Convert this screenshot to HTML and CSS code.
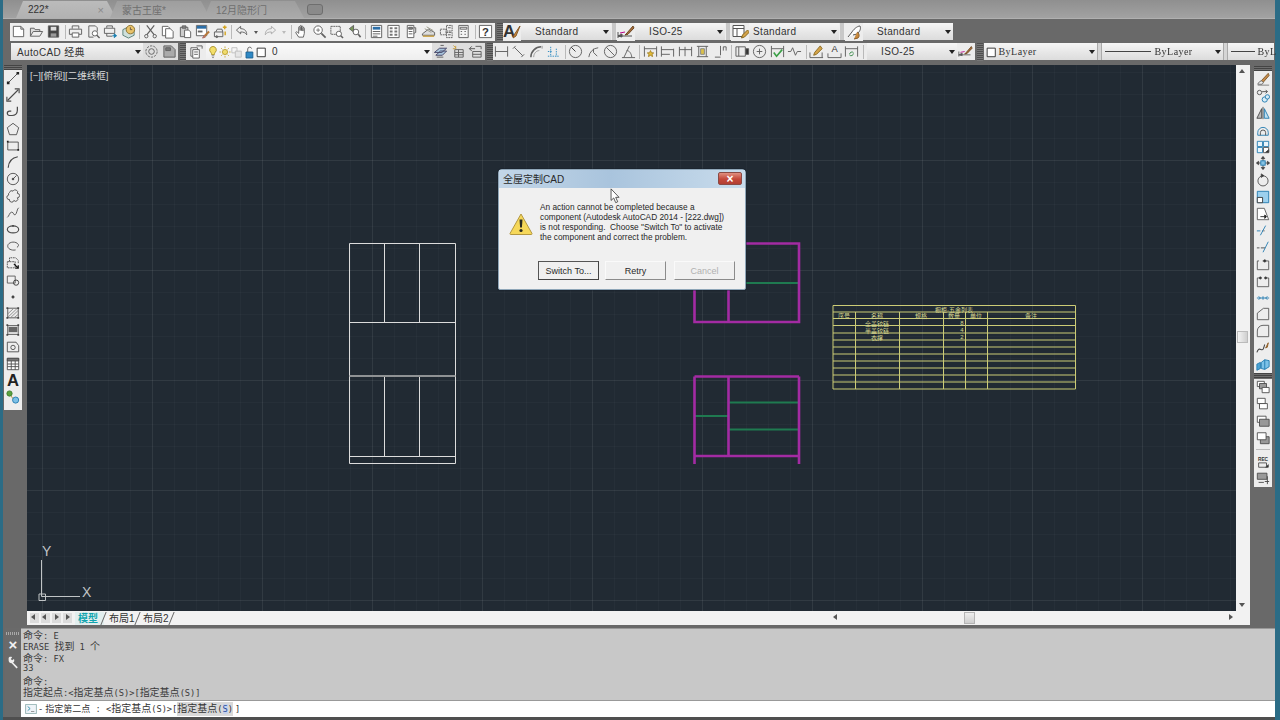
FILE: index.html
```html
<!DOCTYPE html>
<html lang="zh">
<head>
<meta charset="utf-8">
<title>AutoCAD 2014</title>
<link rel="stylesheet" href="styles.css">
</head>
<body>
<svg class="defs" width="0" height="0" aria-hidden="true">
<defs>
<symbol id="new" viewBox="0 0 16 16"><path d="M2.5 2.5h8l3 3v8h-11zM10.5 2.5v3h3" fill="#fff"/></symbol>
<symbol id="open" viewBox="0 0 16 16"><path d="M1.5 13V4.5h4l1 1.5h5v2" fill="#ddd"/><path d="M1.5 13l3-5h10l-3 5z" fill="#eee"/></symbol>
<symbol id="save" viewBox="0 0 16 16"><path d="M2.5 2h11v12h-11z" fill="#444"/><path d="M5 3h6v4H5z" fill="#ddd" stroke="none"/><path d="M5 10h6v3.5H5z" fill="#999" stroke="none"/></symbol>
<symbol id="print" viewBox="0 0 16 16"><path d="M4.500 5V2h7v3M1.500 11V5.500h13V11h-3M4.500 11H1.500"/><path d="M4.500 9.500h7V14h-7z" fill="#fff"/></symbol>
<symbol id="prev" viewBox="0 0 16 16"><path d="M3 2h7l2 2v4M3 2v12h5"/><circle cx="9.500" cy="10" r="2.800" fill="#fff"/><path d="M11.500 12l3 3" stroke-width="1.500"/></symbol>
<symbol id="pub" viewBox="0 0 16 16"><path d="M4 4V2h6v2M1.500 10V4.500h11V10zM4 10v3h6"/><path d="M10 12.500h3M12 10.500l2.500 2-2.500 2z" stroke="#1a7fb0" fill="#1a7fb0"/></symbol>
<symbol id="globe" viewBox="0 0 16 16"><path d="M2 6l6-3 6 3v6l-6 3-6-3z" fill="#cfe0dc" stroke="#5c8078"/><circle cx="10" cy="6" r="4.500" fill="#e9c36a" stroke="#8a7030"/><path d="M10 3.500V6h2" stroke="#654"/></symbol>
<symbol id="cut" viewBox="0 0 16 16"><path d="M4 1.500l8 10M12 1.500l-8 10" stroke-width="1.300"/><circle cx="3.500" cy="13" r="1.800"/><circle cx="12.500" cy="13" r="1.800"/></symbol>
<symbol id="copy" viewBox="0 0 16 16"><path d="M2.500 2.500h6l2 2v8h-8z" fill="#fff"/><path d="M6 5h5l3 3v7H6z" fill="#fff"/></symbol>
<symbol id="paste" viewBox="0 0 16 16"><path d="M2.500 3.500h8v10h-8z" fill="#ccc"/><path d="M4.500 2h4v2.500h-4z" fill="#888"/><path d="M7 6.500h4.500l2 2v6H7z" fill="#fff"/></symbol>
<symbol id="match" viewBox="0 0 16 16"><path d="M1.500 1.500h11v11h-11z" fill="#fff"/><path d="M2 2h10v3H2z" fill="#2c6fa8" stroke="none"/><path d="M3 7h5v2H3z" fill="#666" stroke="none"/><path d="M15 8l-5 5" stroke="#b8793a" stroke-width="2.200"/><path d="M10 12l-2 3 3-1z" fill="#d99a3d" stroke="#a66"/></symbol>
<symbol id="block" viewBox="0 0 16 16"><path d="M1.500 8.500h9v5h-9z"/><path d="M3 8.500l1.500-3h5l1 3"/><circle cx="4" cy="13.500" r="1" fill="#777"/><path d="M12.500 1.500v4M10.500 3.500h4M13 8v4" stroke="#d5a520" stroke-width="1.500"/></symbol>
<symbol id="undo" viewBox="0 0 16 16"><path d="M6 2.500L1.500 6.500 6 10.500V8.500c3 0 5 .5 6.500 3 0-4-2-6.500-6.500-6.500z" fill="#eee"/></symbol>
<symbol id="redo" viewBox="0 0 16 16"><path d="M10 2.500l4.500 4L10 10.500V8.500c-3 0-5 .5-6.500 3 0-4 2-6.500 6.500-6.500z" fill="#eee" stroke="#aaa"/></symbol>
<symbol id="pan" viewBox="0 0 16 16"><path d="M5 14L2 9.500c-.5-1 .7-1.700 1.500-.8L5 10V3.500c0-1 1.400-1 1.500 0V7 2.300c0-1 1.500-1 1.500 0V7 3c0-1 1.500-1 1.500 0v4.500-3c0-1 1.500-1 1.500 0V10l-1 4z" fill="#fff"/></symbol>
<symbol id="zr" viewBox="0 0 16 16"><circle cx="6.500" cy="6.500" r="4.500" fill="#fff"/><path d="M10 10l4.500 4.500" stroke-width="1.800"/><path d="M4.500 6.500h4M6.500 4.500v4" stroke="#777"/></symbol>
<symbol id="zw" viewBox="0 0 16 16"><path d="M2 2.500h10v8.500H2z" stroke-dasharray="2 .6"/><circle cx="10.500" cy="10.500" r="2.800" fill="#fff"/><path d="M12.500 12.500l2.500 2.500" stroke-width="1.600"/></symbol>
<symbol id="zp" viewBox="0 0 16 16"><path d="M7 1.500L2.500 5 7 8.500z" fill="#7a9a5a"/><circle cx="9.500" cy="8.500" r="3" fill="#fff"/><path d="M12 11l2.500 3" stroke-width="1.700"/></symbol>
<symbol id="props" viewBox="0 0 16 16"><path d="M2.500 1.500h11v13h-11z" fill="#fff"/><path d="M4 3h8v3H4z" fill="#2c6fa8" stroke="none"/><path d="M4 8h8M4 10.500h8M4 13h5"/></symbol>
<symbol id="design" viewBox="0 0 16 16"><path d="M2 1.500h12v13H2z" fill="#fff"/><path d="M4 3.500h3v2H4zM9 3.500h3v2H9zM4 7h3v2H4zM9 7h3v2H9zM4 10.500h3v2H4zM9 10.500h3v2H9z" fill="#777" stroke="none"/></symbol>
<symbol id="tool" viewBox="0 0 16 16"><path d="M3.500 1.500h7v13h-7z" fill="#fff"/><path d="M5 3.500h4v2H5zM5 8h4M5 10.500h4" fill="#888"/><path d="M10.500 4h2v5l-2 1"/></symbol>
<symbol id="sheet" viewBox="0 0 16 16"><path d="M1.500 10.500L8 5.500l6.500 3.500v3H1.500z" fill="#ddd"/><path d="M6 3l7 4M4 5l7 4" stroke="#998"/><path d="M2 13h12" stroke="#c9a040" stroke-width="1.500"/></symbol>
<symbol id="markup" viewBox="0 0 16 16"><path d="M1.500 5.500h6v6h-6zM8 1.500h6v6H8zM8 9h6v5.500H8z" stroke-dasharray="2 .7" fill="#eee"/><path d="M9.500 4h3M9.500 11.500h3"/></symbol>
<symbol id="calc" viewBox="0 0 16 16"><path d="M3 1.500h10v13H3z" fill="#f5f5f5"/><path d="M4.500 3.500h7v2h-7zM5 8h1.500M9 8h1.500M5 11h1.500M9 11h1.500"/></symbol>
<symbol id="help" viewBox="0 0 16 16"><path d="M1.500 1.500h13v13h-13z" fill="#fff"/><text x="8" y="12.500" class="glyph" text-anchor="middle">?</text></symbol>
<symbol id="wset" viewBox="0 0 16 16"><circle cx="8" cy="8" r="3"/><circle cx="8" cy="8" r="6" stroke-dasharray="2.500 1.200"/></symbol>
<symbol id="wsave" viewBox="0 0 16 16"><path d="M2 2h8l4 4v8H2z" fill="#aaa"/><path d="M4 4h5v3H4z" fill="#777"/></symbol>
<symbol id="lay" viewBox="0 0 16 16"><path d="M2 4h7v9H2z" fill="#fff"/><path d="M4 6h7v9H4z" fill="#fff"/><path d="M5.500 8.500h4M5.500 11h4M8 2h6v3"/></symbol>
<symbol id="lstack" viewBox="0 0 16 16"><path d="M1.500 9L7 4.500h7.500L9.500 9zM3 12L8 7.500h6.500L10 12z" fill="#a9c6dd" stroke="#446"/><path d="M8 1.500h3.500M4 14h7"/></symbol>
<symbol id="lcur" viewBox="0 0 16 16"><path d="M4 6h9v8H4zM4 9h9M4 11.500h9M8 6v8"/><path d="M2.500 1.500l3 3M5 2v3H2" stroke="#c9a040"/></symbol>
<symbol id="lprev" viewBox="0 0 16 16"><path d="M5 8h9v6H5zM5 11h9"/><path d="M1.500 5h6M4 2.500L1.500 5 4 7.500" stroke="#555"/><path d="M8 2.500h6v3"/></symbol>
<symbol id="bulb" viewBox="0 0 14 16"><path d="M7 1.500a4 4 0 0 0-2.500 7c.6.700.8 1.400.8 2.500h3.400c0-1.100.2-1.800.8-2.500A4 4 0 0 0 7 1.500z" fill="#f3df6a" stroke="#a58e25"/><path d="M5.500 12.500h3M6 14.500h2" stroke="#777"/></symbol>
<symbol id="sun" viewBox="0 0 14 16"><circle cx="7" cy="8" r="3" fill="#f0dc6c" stroke="#b89c2a"/><path d="M7 1.500v2M7 12.500v2M.5 8h2M11.500 8h2M2.500 3.500l1.500 1.500M10 11l1.500 1.500M11.500 3.500L10 5M4 11l-1.500 1.500" stroke="#c5a93a"/></symbol>
<symbol id="frz" viewBox="0 0 14 16"><path d="M1 3h6v6H1z" stroke="#bbb"/><path d="M5 7h7v7H5z" stroke="#bbb" fill="#e6e6e6"/></symbol>
<symbol id="lock" viewBox="0 0 14 16"><path d="M3.500 8h8v7h-8z" fill="#2f88c4" stroke="#1b5f8f"/><path d="M5.500 8V4.500a2.300 2.300 0 0 1 4.500-.5"/></symbol>
<symbol id="sw" viewBox="0 0 14 16"><path d="M2.500 3.500h9.500v10H2.500z" stroke="#222" fill="#fff"/></symbol>
<symbol id="ts" viewBox="0 0 18 18"><text x="0" y="14" class="glyph big">A</text><path d="M17 3l-6 9-1 3 3-2z" fill="#c98a3e" stroke="#8a5a25"/></symbol>
<symbol id="ds" viewBox="0 0 18 18"><path d="M1 15V9M1 13h14" stroke="#555"/><path d="M1 13l4-2v3z" fill="#555"/><path d="M16 3l-6 7-2 2 3-.7 6-6.300z" fill="#a66b38" stroke="#6e4a25"/><path d="M3 10l5-1" stroke="#b08"/></symbol>
<symbol id="tbs" viewBox="0 0 18 18"><path d="M2 2.500h11v11H2z" fill="#fff"/><path d="M2 5.500h11M6 5.500v8" /><path d="M16.500 7l-5 5-1 3 3-1 5-5z" fill="#d4a348" stroke="#8a6a20"/></symbol>
<symbol id="ms" viewBox="0 0 18 18"><path d="M3 14l4-5c1-2 5-6 8-6 1 2 .5 5-3 8l-4 1" fill="#fff"/><path d="M12 9c2 1 3 4 1 6l-4 1" fill="#c98a3e" stroke="#8a5a25"/></symbol>
<symbol id="dlin" viewBox="0 0 16 16"><path d="M1.500 2.500v11M14.500 2.500v11M1.500 8h13"/></symbol>
<symbol id="dal" viewBox="0 0 16 16"><path d="M2 5l3-3M11 14l3-3M3.500 3.500l9 9"/></symbol>
<symbol id="darc" viewBox="0 0 16 16"><path d="M2 14C2 8 7 3 13 3" stroke-width="1.600"/><path d="M5 14c0-4 3-7 6-7M14 2v3" stroke="#999"/></symbol>
<symbol id="dord" viewBox="0 0 16 16"><path d="M2 13h12M5 3v10M11 5v8M2 8h4" stroke="#2b8ac0" stroke-dasharray="1.500 1"/></symbol>
<symbol id="drad" viewBox="0 0 16 16"><circle cx="8" cy="8" r="6.500"/><path d="M8 8L3.500 3.500" stroke="#333"/></symbol>
<symbol id="dj" viewBox="0 0 16 16"><path d="M3 14A11 11 0 0 1 13 4M8 9l4 4M8 9V5"/></symbol>
<symbol id="ddia" viewBox="0 0 16 16"><circle cx="8" cy="8" r="6.500"/><path d="M3.500 3.500l9 9"/></symbol>
<symbol id="dang" viewBox="0 0 16 16"><path d="M1 14.500h14M3 14.500L9 2"/><path d="M6 7c3 0 5 3 5.500 7"/></symbol>
<symbol id="dq" viewBox="0 0 16 16"><path d="M1.500 2.500v11M14.500 2.500v11M1.500 5h13"/><path d="M8 7l1 2.300 2.400.2-1.800 1.500.6 2.400L8 12.100l-2.200 1.300.6-2.400-1.800-1.500 2.400-.2z" fill="#e3bd36" stroke="#a8852a"/></symbol>
<symbol id="dbase" viewBox="0 0 16 16"><path d="M1.500 2.500v11M14.500 5v8.500M1.500 6h13M1.500 11h9"/></symbol>
<symbol id="dcon" viewBox="0 0 16 16"><path d="M1.500 3v10M7.500 3v10M14.500 3v10M1.500 6h13"/></symbol>
<symbol id="dsp" viewBox="0 0 16 16"><path d="M2 2.500h12M2 13.500h12M4 2.500v11M12 2.500v11"/><path d="M6 5h4v6H6z" fill="#dcc148" stroke="#888"/></symbol>
<symbol id="dtl" viewBox="0 0 16 16"><path d="M8 2v10M2 14h6M11 3h3M11 3v4M14 3v4"/></symbol>
<symbol id="dins" viewBox="0 0 16 16"><path d="M1 3h10v10H1z"/><path d="M4 3v10" /><path d="M11.500 5h3v6h-3z" fill="#333"/></symbol>
<symbol id="dcen" viewBox="0 0 16 16"><circle cx="8" cy="8" r="6.500"/><path d="M5 8h6M8 5v6"/></symbol>
<symbol id="dchk" viewBox="0 0 16 16"><path d="M1.500 2v12M14.500 2v12M1.500 5h13"/><path d="M4 9l3 4 6-7" stroke="#3aa046" stroke-width="1.700"/></symbol>
<symbol id="dbrk" viewBox="0 0 16 16"><path d="M1 8h3l2-4 3 8 2-4h4"/></symbol>
<symbol id="dedit" viewBox="0 0 16 16"><path d="M1 14.500h14M1 9v5.500M14 9v5.500"/><path d="M12 2L6 9l-1 3 3-1 6-6z" fill="#d4a348" stroke="#8a6a20"/></symbol>
<symbol id="dtext" viewBox="0 0 16 16"><text x="8" y="9" class="glyph mid" text-anchor="middle">A</text><path d="M1 14.500h14M1 10v4.500M15 10v4.500"/></symbol>
<symbol id="dupd" viewBox="0 0 16 16"><path d="M1.500 2.500v11M14.500 2.500v11M1.500 5h13"/><path d="M6 11a2.500 2.500 0 0 1 4-2M10 10a2.500 2.500 0 0 1-4 2" stroke="#3a8a4a"/></symbol>
<symbol id="line" viewBox="0 0 16 16"><path d="M2.500 13.500l11-11"/><path d="M1 12h3v3H1zM12 1h3v3h-3z" fill="#222" stroke="none"/></symbol>
<symbol id="xline" viewBox="0 0 16 16"><path d="M2 14L14 2" stroke-width="1.300"/><path d="M1 10v5h5M10 1h5v5" stroke-width="1.300"/></symbol>
<symbol id="pline" viewBox="0 0 16 16"><path d="M13 2v4c0 4-3 6-6 6H4a2.500 2.500 0 0 1 0-5h2" stroke-width="1.400"/></symbol>
<symbol id="poly" viewBox="0 0 16 16"><path d="M8 1.500l6.500 5-2.500 8H4L1.500 6.500z"/></symbol>
<symbol id="rect" viewBox="0 0 16 16"><path d="M2 3.500h12v9H2z"/><path d="M1 2h2v2H1zM13 11.500h2v2h-2z" fill="#222" stroke="none"/></symbol>
<symbol id="arc" viewBox="0 0 16 16"><path d="M2.500 14.500C3 8 7 3 13.500 2" stroke-width="1.400"/></symbol>
<symbol id="circ" viewBox="0 0 16 16"><circle cx="8" cy="8" r="6.500"/><path d="M8 8l4-4" /><circle cx="8" cy="8" r="1" fill="#222"/></symbol>
<symbol id="cloud" viewBox="0 0 16 16"><path d="M4 4a2.500 2.500 0 0 1 4-1.500A2.500 2.500 0 0 1 13 5a2.500 2.500 0 0 1 0 5 2.500 2.500 0 0 1-4 3 2.500 2.500 0 0 1-5-1 2.500 2.500 0 0 1-1-5 2.500 2.500 0 0 1 1-3z"/></symbol>
<symbol id="spl" viewBox="0 0 16 16"><path d="M1.500 13c2-1 2.500-6 5-6s2 4 4 3 2-7 4-8"/></symbol>
<symbol id="ell" viewBox="0 0 16 16"><ellipse cx="8" cy="8.500" rx="6.500" ry="4" stroke-width="1.300"/><path d="M7 4.500h2" stroke-width="2"/></symbol>
<symbol id="ella" viewBox="0 0 16 16"><path d="M11 12.500C6 13.500 1.500 11 2 7.500S9 2 13 5c2 1.500 1.500 3.500-.5 4.500"/></symbol>
<symbol id="ins" viewBox="0 0 16 16"><path d="M1.500 6.500h9v7h-9zM4 6.500V2h7l3 3v4" stroke-dasharray="2 .8"/><path d="M9 9l5 5M14 10.500V14h-3.500" stroke="#111" stroke-width="1.400"/></symbol>
<symbol id="mkb" viewBox="0 0 16 16"><path d="M1.500 3.500h9v8h-9z" fill="#eee" stroke="#555"/><circle cx="11.500" cy="11" r="3" stroke="#333"/></symbol>
<symbol id="pt" viewBox="0 0 16 16"><circle cx="8" cy="8" r="1.300" fill="#333"/></symbol>
<symbol id="hat" viewBox="0 0 16 16"><path d="M2 2.500h12v11H2z"/><path d="M2 13l11-10.500M5 13.500l9-8.500M2 9l7-6.500M9 13.500l5-4" stroke="#888"/><path d="M.5 1.500h2v2h-2zM13 1.500h2v2h-2zM.5 12.500h2v2h-2zM13 12.500h2v2h-2z" fill="#444" stroke="none"/></symbol>
<symbol id="grad" viewBox="0 0 16 16"><path d="M2 3h12v10H2z"/><path d="M3 4.500h10v6H3z" fill="#666" stroke="none"/><path d="M.5 1.500h2v2h-2zM13 1.500h2v2h-2zM.5 12.500h2v2h-2zM13 12.500h2v2h-2z" fill="#444" stroke="none"/></symbol>
<symbol id="reg" viewBox="0 0 16 16"><path d="M1.500 2.500h10l3 4v7h-13z"/><circle cx="8" cy="8.500" r="2.500"/></symbol>
<symbol id="tab" viewBox="0 0 16 16"><path d="M1.500 1.500h13v13h-13z" fill="#fff"/><path d="M1.500 1.500h13v3h-13z" fill="#777"/><path d="M1.500 8h13M1.500 11h13M6 4.500v10M10.500 4.500v10"/></symbol>
<symbol id="mt" viewBox="0 0 16 16"><text x="8" y="15" class="glyph huge" text-anchor="middle">A</text></symbol>
<symbol id="add" viewBox="0 0 16 16"><circle cx="4" cy="4" r="3" fill="#5aa23e" stroke="#3b7a2a"/><path d="M6 7c1 3 3 3 4 3" stroke="#a8852a"/><circle cx="11" cy="11.500" r="3.500" fill="#7dc0e6" stroke="#1e78ae"/></symbol>
<symbol id="erase" viewBox="0 0 16 16"><path d="M14 1.500L6 10l2 2 7-8z" fill="#c4894a" stroke="#7d5a2c"/><path d="M6 10l-3 2-1 2h5l1.500-2z" fill="#eee" stroke="#666"/><path d="M2 15h13" stroke="#777"/></symbol>
<symbol id="cop2" viewBox="0 0 16 16"><circle cx="4" cy="4" r="2.500"/><circle cx="10" cy="12" r="3" stroke="#1e78ae" fill="#d6ecf7"/><circle cx="13" cy="9" r="2.500" stroke="#1e78ae" fill="#d6ecf7"/><path d="M7 3h6M11 1l2 2-2 2"/></symbol>
<symbol id="mir" viewBox="0 0 16 16"><path d="M8 1v14M6.500 3v11H1z" stroke="#444" fill="#bbb"/><path d="M9.500 3v11H15z" stroke="#1e78ae" fill="#bfdff0"/></symbol>
<symbol id="off" viewBox="0 0 16 16"><path d="M2 14v-3a6 6 0 0 1 12 0v3z" stroke="#1e78ae"/><path d="M5 14v-3a3 3 0 0 1 6 0v3"/></symbol>
<symbol id="arr" viewBox="0 0 16 16"><path d="M1.500 1.500h6v6h-6zM8.500 1.500h6v6h-6zM1.500 8.500h6v6h-6z" stroke="#1e78ae" fill="#eaf5fb"/><path d="M8.500 8.500h6v6h-6z" fill="#fff"/><path d="M11 14l3.500-3v3z" fill="#222"/></symbol>
<symbol id="mov" viewBox="0 0 16 16"><path d="M8 1v14M1 8h14"/><path d="M8 .5l2 2.500H6zM8 15.500L6 13h4zM.5 8L3 6v4zM15.500 8L13 10V6z" fill="#333"/><rect x="5.500" y="5.500" width="5" height="5" fill="#86c2e2" stroke="#1e78ae"/></symbol>
<symbol id="rot" viewBox="0 0 16 16"><circle cx="8" cy="9" r="5.800"/><path d="M6 1l3 2-3 2z" fill="#333"/></symbol>
<symbol id="sca" viewBox="0 0 16 16"><path d="M1.500 1.500h13v13h-13z" fill="#9cd0ee" stroke="#1e78ae"/><path d="M1.500 8.500h6v6h-6z" fill="#fff" stroke="#333"/></symbol>
<symbol id="str" viewBox="0 0 16 16"><path d="M1.500 1.500h8l5 13h-13z" fill="#fff" stroke="#555"/><path d="M5 11h5M10 9v4l2-2z" fill="#222" stroke="#222"/></symbol>
<symbol id="tri" viewBox="0 0 16 16"><path d="M1 9h4M7 9h1M11 3L5 14" stroke="#1e78ae"/><path d="M8 9h2" stroke="#777"/></symbol>
<symbol id="ext" viewBox="0 0 16 16"><path d="M1 9h3M5.500 9h5" stroke="#444"/><path d="M14 2L8 14" stroke="#1e78ae"/></symbol>
<symbol id="brk1" viewBox="0 0 16 16"><path d="M1.500 14.500v-10h2M14.500 14.500v-10h-7M1.500 14.500h13" stroke="#555"/><circle cx="10" cy="4.500" r="1.300" fill="#222"/></symbol>
<symbol id="brk2" viewBox="0 0 16 16"><path d="M1.500 14.500v-10h3M14.500 14.500v-10h-3M1.500 14.500h13" stroke="#555"/><circle cx="5" cy="4.500" r="1.200" fill="#222"/><circle cx="11" cy="4.500" r="1.200" fill="#222"/></symbol>
<symbol id="joi" viewBox="0 0 16 16"><path d="M1 8h14" stroke="#1e78ae"/><path d="M3 6l2 2-2 2M13 6l-2 2 2 2M8 6v4" stroke="#1e78ae"/></symbol>
<symbol id="cha" viewBox="0 0 16 16"><path d="M1.500 14.500V7l7-5.500h6v13z" stroke="#555"/></symbol>
<symbol id="fil" viewBox="0 0 16 16"><path d="M1.500 14.500V8a6.500 6.500 0 0 1 6.500-6.500h6.500v13z" stroke="#555"/></symbol>
<symbol id="bed" viewBox="0 0 16 16"><path d="M1 13c2-6 4-3 6-3s2-4 3-6" stroke="#444" stroke-width="1.200"/><path d="M11 8l3-6-1 5z" fill="#c98a3e" stroke="#8a5a25"/></symbol>
<symbol id="exp" viewBox="0 0 16 16"><path d="M1 7l4-2v7l-4 2z" fill="#4ba3d4" stroke="#1e78ae"/><path d="M6 5l4-3 5 1v7l-5 3-4-1z" fill="#7dc2e8" stroke="#1e78ae"/><path d="M10 2v11" stroke="#1e78ae"/></symbol>
<symbol id="ord1" viewBox="0 0 16 16"><path d="M1.500 1.500h8v6h-8z" fill="#fff"/><path d="M4 4h8v6H4z" fill="#999"/><path d="M7 8.500h8v6H7z" fill="#fff"/></symbol>
<symbol id="ord2" viewBox="0 0 16 16"><path d="M1.500 1.500h9v6h-9z" fill="#fff"/><path d="M4 7.500h9v6H4z" fill="#fff"/></symbol>
<symbol id="ord3" viewBox="0 0 16 16"><path d="M1.500 2.500h10v7h-10z" fill="#fff"/><path d="M4 6h11v8H4z" fill="#999"/></symbol>
<symbol id="ord4" viewBox="0 0 16 16"><path d="M5 6.500h10v8H5z" fill="#999"/><path d="M1.500 2h10v8h-10z" fill="#fff"/></symbol>
<symbol id="rec" viewBox="0 0 16 16"><text x="8" y="7" class="glyph tiny" text-anchor="middle">REC</text><path d="M3 9h9v5H3z"/><path d="M11 14l3-3v3z" fill="#222"/></symbol>
<symbol id="rep" viewBox="0 0 16 16"><path d="M1.500 2.500h11v7h-11z" fill="#999"/><path d="M13 6v9M10 12h5M3 13h6" stroke="#444"/></symbol>
<symbol id="warn" viewBox="0 0 24 22"><path d="M12 1L23 20.500a.8.800 0 0 1-.7 1H1.700a.8.800 0 0 1-.7-1z" fill="#f6d85a" stroke="#b39740"/><path d="M10.500 6.500h3l-.6 8h-1.800z" fill="#2a2a20" stroke="none"/><circle cx="12" cy="17.500" r="1.600" fill="#2a2a20" stroke="none"/></symbol>
<symbol id="wrench" viewBox="0 0 16 16"><path d="M3 3.500c.4-1.500 2.500-2 4-1L5.500 4.500 7 6l2-1.500c1 1.500.5 3.500-1 4L13.500 14 12 15.500 6.500 9.500C4.500 9.500 3 8 3 6z" fill="#eee" stroke="none"/></symbol>
<symbol id="prompt" viewBox="0 0 14 12"><path d="M.5.500h13v11H.5z" fill="#eef3f7" stroke="#8aa"/><path d="M3 3l3 2.500L3 8" stroke="#28a" fill="none"/><path d="M7 9h4" stroke="#888"/></symbol>
</defs>
</svg>

<main class="win">
  <header class="tabbar">
    <div class="dtab dtab-on"><span>222*</span><b class="dclose">×</b></div>
    <div class="dtab"><span>蒙古王座*</span></div>
    <div class="dtab"><span>12月隐形门</span></div>
    <div class="dnew"></div>
  </header>

  <section class="row row1">
    <div class="tb tb-std">
      <svg class="i"><use href="#new"/></svg><svg class="i"><use href="#open"/></svg><svg class="i"><use href="#save"/></svg><i class="sep"></i>
      <svg class="i"><use href="#print"/></svg><svg class="i"><use href="#prev"/></svg><svg class="i"><use href="#pub"/></svg><svg class="i"><use href="#globe"/></svg><i class="sep"></i>
      <svg class="i"><use href="#cut"/></svg><svg class="i"><use href="#copy"/></svg><svg class="i"><use href="#paste"/></svg><svg class="i"><use href="#match"/></svg><svg class="i"><use href="#block"/></svg><i class="sep"></i>
      <svg class="i"><use href="#undo"/></svg><i class="drop"></i><svg class="i"><use href="#redo"/></svg><i class="drop drop-off"></i><i class="sep"></i>
      <svg class="i"><use href="#pan"/></svg><svg class="i"><use href="#zr"/></svg><svg class="i"><use href="#zw"/></svg><svg class="i"><use href="#zp"/></svg><i class="sep"></i>
      <svg class="i"><use href="#props"/></svg><svg class="i"><use href="#design"/></svg><svg class="i"><use href="#tool"/></svg><svg class="i"><use href="#sheet"/></svg><svg class="i"><use href="#markup"/></svg><svg class="i"><use href="#calc"/></svg><i class="sep"></i>
      <svg class="i"><use href="#help"/></svg>
    </div>
    <i class="grip"></i>
    <div class="tb tb-sty">
      <svg class="s"><use href="#ts"/></svg><div class="combo w90 ctr">Standard</div><i class="minis"></i>
      <svg class="s"><use href="#ds"/></svg><div class="combo w90 ctr">ISO-25</div><i class="minis"></i>
      <svg class="s"><use href="#tbs"/></svg><div class="combo w90 lft">Standard</div><i class="minis"></i>
      <svg class="s"><use href="#ms"/></svg><div class="combo w90 ctr">Standard</div>
    </div>
  </section>

  <section class="row row2">
    <div class="combo wsp">AutoCAD 经典</div>
    <div class="tb tb-ws"><svg class="i"><use href="#wset"/></svg><svg class="i"><use href="#wsave"/></svg></div>
    <i class="grip"></i>
    <div class="tb tb-lay"><svg class="i"><use href="#lay"/></svg></div>
    <div class="combo wlay">
      <svg class="ls"><use href="#bulb"/></svg><svg class="ls"><use href="#sun"/></svg><svg class="ls"><use href="#frz"/></svg><svg class="ls"><use href="#lock"/></svg><svg class="ls"><use href="#sw"/></svg><span class="lname">0</span>
    </div>
    <div class="tb tb-ws"><svg class="i"><use href="#lstack"/></svg><svg class="i"><use href="#lcur"/></svg><svg class="i"><use href="#lprev"/></svg></div>
    <i class="grip"></i>
    <div class="tb tb-dim">
      <svg class="i"><use href="#dlin"/></svg><svg class="i"><use href="#dal"/></svg><svg class="i"><use href="#darc"/></svg><svg class="i"><use href="#dord"/></svg><i class="sep"></i>
      <svg class="i"><use href="#drad"/></svg><svg class="i"><use href="#dj"/></svg><svg class="i"><use href="#ddia"/></svg><svg class="i"><use href="#dang"/></svg><i class="sep"></i>
      <svg class="i"><use href="#dq"/></svg><svg class="i"><use href="#dbase"/></svg><svg class="i"><use href="#dcon"/></svg><svg class="i"><use href="#dsp"/></svg><svg class="i"><use href="#dtl"/></svg><i class="sep"></i>
      <svg class="i"><use href="#dins"/></svg><svg class="i"><use href="#dcen"/></svg><svg class="i"><use href="#dchk"/></svg><svg class="i"><use href="#dbrk"/></svg><i class="sep"></i>
      <svg class="i"><use href="#dedit"/></svg><svg class="i"><use href="#dtext"/></svg><svg class="i"><use href="#dupd"/></svg><i class="sep"></i>
      <div class="combo w90 ctr dimstyle">ISO-25</div>
      <svg class="i"><use href="#ds"/></svg>
    </div>
    <i class="grip"></i>
    <div class="combo wbl"><svg class="ls"><use href="#sw"/></svg><span class="bl">ByLayer</span></div>
    <i class="bar"></i>
    <div class="combo wlt"><i class="ltline"></i><span class="bl">ByLayer</span></div>
    <i class="bar"></i>
    <div class="combo wlw"><i class="ltline short"></i><span class="bl">ByL</span></div>
  </section>

  <section class="work">
    <aside class="vtool vtool-l">
      <i class="vgrip"></i>
      <div class="vgroup">
        <svg class="v"><use href="#line"/></svg><svg class="v"><use href="#xline"/></svg><svg class="v"><use href="#pline"/></svg><svg class="v"><use href="#poly"/></svg><svg class="v"><use href="#rect"/></svg><svg class="v"><use href="#arc"/></svg><svg class="v"><use href="#circ"/></svg><svg class="v"><use href="#cloud"/></svg><svg class="v"><use href="#spl"/></svg><svg class="v"><use href="#ell"/></svg><svg class="v"><use href="#ella"/></svg><svg class="v"><use href="#ins"/></svg><svg class="v"><use href="#mkb"/></svg><svg class="v"><use href="#pt"/></svg><svg class="v"><use href="#hat"/></svg><svg class="v"><use href="#grad"/></svg><svg class="v"><use href="#reg"/></svg><svg class="v"><use href="#tab"/></svg><svg class="v"><use href="#mt"/></svg><svg class="v"><use href="#add"/></svg>
      </div>
    </aside>

    <div class="center">
      <div class="view">
        <div class="canvas">
          <svg class="drawing" viewBox="27 65 1209 546">
            <text x="30" y="79" class="vlabel">[−][俯视][二维线框]</text>
            <g class="w">
              <path d="M349.500 243.500H455.500V463.500H349.500ZM384.500 243.500V322.500M419.500 243.500V322.500M349.500 322.500H455.500M384.500 376V456.500M419.500 376V456.500M349.500 456.500H455.500"/>
              <path class="w2" d="M349.500 376H455.500"/>
            </g>
            <g class="gr">
              <path d="M745 283H798M729 402.500H798M729 429.500H798M695 416H728"/>
            </g>
            <g class="mg">
              <path d="M694.500 243.500H799V322H694.500ZM728.500 243.500V322"/>
              <path d="M694.500 376.500H799M694.500 376.500V464M799 376.500V464M694.500 456H799M728.500 376.500V456"/>
            </g>
            <g class="ty">
              <path d="M833 305.500H1075.500V389H833ZM833 312H1075.500M833 318.500H1075.500M833 325.500H1075.500M833 333H1075.500M833 340H1075.500M833 347H1075.500M833 354H1075.500M833 361H1075.500M833 368H1075.500M833 375H1075.500M833 382H1075.500M855.500 312V389M899.500 312V389M943.500 312V389M965.500 312V389M987.500 312V389"/>
            </g>
            <g class="tt">
              <text x="954" y="311.500">橱柜·五金列表</text>
              <text x="844" y="318">序号</text><text x="877" y="318">名称</text><text x="921" y="318">规格</text><text x="954" y="318">数量</text><text x="976" y="318">单位</text><text x="1031" y="318">备注</text>
              <text x="877" y="325.500">全盖铰链</text><text x="877" y="332.500">半盖铰链</text><text x="877" y="339.500">衣撑</text>
              <text x="962" y="324.500">8</text><text x="962" y="331.500">4</text><text x="962" y="338.500">2</text>
            </g>
            <g class="ucs">
              <path d="M41.500 560V596.500H80"/>
              <path d="M39 594H45.500V600.500H39Z"/>
              <text x="42" y="556">Y</text><text x="82" y="597">X</text>
            </g>
          </svg>
        </div>
        <div class="vscroll"><i class="up"></i><i class="vthumb"></i><i class="down"></i></div>
      </div>
      <div class="hbar">
        <div class="navs"><i class="nav n1"></i><i class="nav n2"></i><i class="nav n3"></i><i class="nav n4"></i></div>
        <div class="ltabs"><span class="ltab ltab-on">模型</span><span class="ltab">布局1</span><span class="ltab">布局2</span></div>
        <div class="hscroll"><i class="hl"></i><i class="hthumb"></i><i class="hr"></i></div>
      </div>
    </div>

    <aside class="vtool vtool-r">
      <i class="vgrip"></i>
      <div class="vgroup">
        <svg class="v"><use href="#erase"/></svg><svg class="v"><use href="#cop2"/></svg><svg class="v"><use href="#mir"/></svg><svg class="v"><use href="#off"/></svg><svg class="v"><use href="#arr"/></svg><svg class="v"><use href="#mov"/></svg><svg class="v"><use href="#rot"/></svg><svg class="v"><use href="#sca"/></svg><svg class="v"><use href="#str"/></svg><svg class="v"><use href="#tri"/></svg><svg class="v"><use href="#ext"/></svg><svg class="v"><use href="#brk1"/></svg><svg class="v"><use href="#brk2"/></svg><svg class="v"><use href="#joi"/></svg><svg class="v"><use href="#cha"/></svg><svg class="v"><use href="#fil"/></svg><svg class="v"><use href="#bed"/></svg><svg class="v"><use href="#exp"/></svg>
      </div>
      <i class="vgrip vgrip-2"></i>
      <div class="vgroup">
        <svg class="v"><use href="#ord1"/></svg><svg class="v"><use href="#ord2"/></svg><svg class="v"><use href="#ord3"/></svg><svg class="v"><use href="#ord4"/></svg><i class="hsep"></i><svg class="v"><use href="#rec"/></svg><svg class="v"><use href="#rep"/></svg>
      </div>
    </aside>
  </section>

  <section class="cmd">
    <div class="cmdside"><i class="cgrip"></i><b class="cx">×</b><svg class="wr"><use href="#wrench"/></svg></div>
    <div class="cmdmain">
      <div class="hist">
        <p><span class="zh">命令</span>: E</p>
        <p>ERASE <span class="zh">找到</span> 1 <span class="zh">个</span></p>
        <p><span class="zh">命令</span>: FX</p>
        <p>33</p>
        <p><span class="zh">命令</span>:</p>
        <p><span class="zh">指定起点</span>:&lt;<span class="zh">指定基点</span>(S)&gt;[<span class="zh">指定基点</span>(S)]</p>
      </div>
      <div class="input">
        <svg class="pr"><use href="#prompt"/></svg>
        <span class="inline"><span class="dash">-</span><span class="zh first">指定第二点</span> : &lt;<span class="zh">指定基点</span>(S)&gt;[<span class="hi"><span class="zh">指定基点</span>(<em>S</em>)</span>]</span>
      </div>
    </div>
  </section>
  <footer class="status"></footer>

  <div class="dialog" role="alertdialog">
    <div class="dtitle"><span>全屋定制CAD</span><b class="dx">×</b></div>
    <div class="dbody">
      <svg class="warn"><use href="#warn"/></svg>
      <p class="dmsg">An action cannot be completed because a<br>component (Autodesk AutoCAD 2014 - [222.dwg])<br>is not responding.  Choose "Switch To" to activate<br>the component and correct the problem.</p>
    </div>
    <div class="dbtns">
      <button class="btn btn-def">Switch To...</button>
      <button class="btn">Retry</button>
      <button class="btn btn-off">Cancel</button>
    </div>
  </div>
  <svg class="cursor" viewBox="0 0 12 18"><path d="M1 1V14L4 11.200 6.200 16.500 8.500 15.500 6.200 10.500H10Z"/></svg>
</main>
</body>
</html>
```
FILE: styles.css
```css
* { box-sizing: border-box; }
html, body { margin: 0; height: 100%; }
body {
  width: 1280px; height: 720px; overflow: hidden;
  background: #2b6c86;
  font-family: "Liberation Sans", "Noto Sans CJK SC", sans-serif;
}
.defs { position: absolute; }
.win {
  position: relative;
  margin-left: 3px; width: 1272px; height: 720px;
  display: flex; flex-direction: column;
  background: #696969;
  filter: blur(.4px);
}
i { display: block; font-style: normal; flex: none; }

/* drawing tabs */
.tabbar {
  height: 19px; flex: none; display: flex; align-items: flex-end;
  padding-left: 13px;
  background: linear-gradient(#8f8f8f, #a2a2a2);
  border-bottom: 1px solid #b0b0b0;
}
.dtab {
  width: 100px; height: 17px; margin-right: -6px; padding-left: 12px;
  display: flex; align-items: center; justify-content: space-between;
  font-size: 10px; color: #6f6f6f;
  background: linear-gradient(#9e9e9e, #aaa);
  clip-path: polygon(0 100%, 7px 0, 91% 0, 100% 100%);
}
.dtab-on { color: #333; background: linear-gradient(#bbb, #b2b2b2); padding-right: 12px; }
.dclose { font-size: 11px; font-weight: 400; color: #8a8a8a; }
.dnew { width: 16px; height: 11px; margin: 0 0 3px 9px; background: #8a8a8a; border: 1px solid #6e6e6e; border-radius: 3px; }

/* toolbars */
.row { display: flex; flex: none; align-items: center; }
.row1 { height: 19px; margin-top: 3px; padding-left: 7px; }
.row2 { height: 17px; margin-top: 2px; padding-left: 8px; }
.tb { display: flex; align-items: center; height: 18px; background: #efefef; }
.row2 .tb { height: 17px; }
.tb-std { width: 485px; padding-left: 0; }
.tb-sty { background: none; gap: 0; }
.tb-ws { background: #dedede; }
.tb-lay { background: #ececec; width: 20px; padding-left: 2px; }
.tb-dim { background: #ececec; }
.i { width: 15px; height: 15px; margin: 0 1.250px; flex: none; fill: none; stroke: #606060; }
.s { width: 18px; height: 18px; flex: none; fill: none; stroke: #555; background: #ededed; }
.sep { width: 4.500px; height: 14px; position: relative; }
.sep::after { content: ""; position: absolute; left: 2px; top: 0; width: 1px; height: 14px; background: #b9b9b9; }
.drop { width: 10px; height: 14px; position: relative; }
.drop::after { content: ""; position: absolute; left: 3px; top: 6px; border: 2px solid transparent; border-top: 3px solid #555; }
.drop-off::after { border-top-color: #bbb; }
.grip {
  width: 6px; height: 18px; margin: 0 0 0 2px;
  background: repeating-linear-gradient(#4f4f4f 0 1px, #777 1px 2px);
}
.minis { width: 6px; height: 17px; background: #c8c8c8; border-left: 1px solid #eee; border-right: 1px solid #eee; }
.combo {
  position: relative; flex: none; height: 17px;
  display: flex; align-items: center;
  background: linear-gradient(#f6f6f6, #e7e7e7 55%, #dcdcdc);
  font-size: 10px; letter-spacing: .35px; color: #333;
}
.combo::after { content: ""; position: absolute; right: 2px; top: 7px; border: 3px solid transparent; border-top: 4px solid #222; }
.w90 { width: 90px; }
.ctr { padding-left: 14px; }
.lft { padding-left: 4px; }
.dimstyle { margin-left: 2px; }
.wsp { width: 132px; padding-left: 6px; font-size: 10px; }
.wlay { width: 226px; padding-left: 1px; background: linear-gradient(#fafafa, #eee); }
.ls { width: 12px; height: 14px; flex: none; fill: none; stroke: #555; }
.lname { margin-left: 5px; }
.wbl { width: 113px; padding-left: 1px; margin-left: 1px; }
.wlt { width: 121px; }
.wlw { width: 46px; }
.wlw::after { display: none; }
.bl { font-family: "Liberation Serif", serif; font-size: 10px; letter-spacing: .45px; white-space: nowrap; }
.wbl .bl { margin-left: 2px; }
.ltline { width: 46px; height: 1px; margin: 0 4px 0 3px; background: #444; }
.ltline.short { width: 24px; margin-right: 3px; }
.bar { width: 5px; height: 17px; background: #d5d5d5; border: 1px solid #aaa; border-width: 0 1px; }

/* main work area */
.work { height: 565px; flex: none; display: flex; padding-top: 5px; }
.vtool { flex: none; display: flex; flex-direction: column; width: 18px; }
.vtool-l { margin: 0 5px 0 1px; }
.vtool-r { margin: 1px 3px 0 4px; }
.vgrip { height: 5px; background: repeating-linear-gradient(#444 0 1px, #6e6e6e 1px 2px); }
.vgrip-2 { height: 6px; }
.vgroup { display: flex; flex-direction: column; align-items: center; background: #ededed; }
.vtool-l .vgroup { padding-bottom: 4px; }
.v { width: 14px; height: 14px; margin: 1.400px 0; flex: none; fill: none; stroke: #4a4a4a; }
.hsep { width: 14px; height: 1px; margin: 3px 0; background: #bbb; }
.center { flex: none; width: 1223px; display: flex; flex-direction: column; }
.view { height: 546px; display: flex; flex: none; }
.canvas {
  width: 1209px; height: 546px; flex: none;
  background-color: #212a33;
  background-image:
    repeating-linear-gradient(90deg, rgba(255,255,255,.05) 0 1px, transparent 1px 110px),
    repeating-linear-gradient(rgba(255,255,255,.05) 0 1px, transparent 1px 110px),
    repeating-linear-gradient(90deg, rgba(255,255,255,.022) 0 1px, transparent 1px 22px),
    repeating-linear-gradient(rgba(255,255,255,.022) 0 1px, transparent 1px 22px);
  background-position: 15px 95px, 15px 95px, 15px 7px, 15px 7px;
}
.drawing { display: block; width: 1209px; height: 546px; fill: none; }
.vlabel { font-size: 9.500px; fill: #d8d8d8; stroke: none; }
.w path { stroke: #dcdcdc; stroke-width: 1; }
.w .w2 { stroke: #8f9294; stroke-width: 2; }
.gr path { stroke: #1f7a50; stroke-width: 2; }
.mg path { stroke: #a32ba3; stroke-width: 2.600; }
.ty path { stroke: #cccc76; stroke-width: 1; }
.tt text { font-size: 6px; fill: #d6d690; text-anchor: middle; stroke: none; }
.ucs path { stroke: #c0c4c6; stroke-width: 1; }
.ucs text { font-size: 14px; fill: #c0c4c6; stroke: none; font-weight: 400; }
.vscroll { width: 14px; height: 546px; flex: none; background: #f2f2f2; position: relative; }
.up, .down { position: absolute; left: 3px; border: 3.500px solid transparent; }
.up { top: 1px; border-bottom: 4px solid #555; }
.down { bottom: 1px; border-top: 4px solid #555; }
.vthumb { position: absolute; left: 1px; top: 266px; width: 11px; height: 12px; background: linear-gradient(90deg, #f4f4f4, #cfcfcf); border: 1px solid #bbb; }
.hbar { height: 14px; display: flex; flex: none; background: #f2f2f2; }
.navs { width: 45px; display: flex; align-items: center; padding-left: 3px; gap: 2px; flex: none; }
.nav { width: 9px; height: 10px; position: relative; background: #dcdcdc; }
.nav::after { content: ""; position: absolute; top: 1px; border: 3.500px solid transparent; }
.n1::after, .n2::after { left: -2px; border-right: 4px solid #555; }
.n3::after, .n4::after { left: 3px; border-left: 4px solid #555; }
.ltabs { width: 753px; flex: none; display: flex; align-items: center; font-size: 10px; color: #333; padding-left: 3px; }
.ltab { position: relative; width: 34px; padding-left: 5px; height: 13px; line-height: 13px; white-space: nowrap; }
.ltab::after { content: ""; position: absolute; right: 0; top: 0; width: 1px; height: 13px; background: #666; transform: skewX(-22deg); }
.ltab-on { color: #12a5b0; font-weight: 700; background: #e2eeee; width: 29px; padding-left: 3px; }
.hscroll { flex: 1; position: relative; }
.hl, .hr { position: absolute; top: 3px; border: 3.500px solid transparent; }
.hl { left: 5px; border-right: 4px solid #555; }
.hr { right: 14px; border-left: 4px solid #555; }
.hthumb { position: absolute; left: 139px; top: 1px; width: 11px; height: 12px; background: linear-gradient(#eee, #cfcfcf); border: 1px solid #b5b5b5; }

/* command line */
.cmd { height: 89px; flex: none; display: flex; margin-top: 3px; padding-left: 2px; }
.cmdside { width: 16px; flex: none; background: #6a6a6a; display: flex; flex-direction: column; align-items: center; }
.cgrip { width: 14px; height: 3px; margin-top: 4px; background: repeating-linear-gradient(90deg, #a8a8a8 0 1px, #6a6a6a 1px 2px); }
.cx { color: #f2f2f2; font-size: 15px; line-height: 14px; margin-top: 3px; }
.wr { width: 14px; height: 14px; margin-top: 3px; }
.cmdmain { flex: 1; display: flex; flex-direction: column; border-top: 1px solid #999; }
.hist { height: 71px; background: #c8c8c8; padding: 0 0 0 2px; font-family: "DejaVu Sans Mono", "Liberation Mono", monospace; font-size: 8.700px; color: #3a3a3a; }
.hist p { margin: 0; height: 11.400px; line-height: 11.400px; white-space: pre; }
.zh { display: inline-block; line-height: 11px; font-family: "Noto Sans CJK SC", sans-serif; font-size: 10px; }
.input {
  height: 17px; background: #fff; border-top: 1px solid #999;
  display: flex; align-items: center; padding-left: 4px;
  font-family: "DejaVu Sans Mono", monospace; font-size: 8.700px; color: #333;
}
.inline { white-space: pre; line-height: 13px; }
.input .zh.first { font-size: 9px; }
.pr { width: 12px; height: 10px; flex: none; margin-right: 1px; }
.dash { margin-right: 2px; }
.hi { display: inline-block; margin-right: 2px; background: #d9d9d9; }
.hi em { font-style: normal; background: #c6d2ea; color: #2a4fa0; }
.status { flex: 1; background: #4f4f4f; }

/* dialog */
.dialog {
  position: absolute; left: 495px; top: 169px; width: 248px; height: 121px;
  background: #f0f0f0; border: 1px solid #8fa6b8; border-radius: 4px 4px 2px 2px;
  box-shadow: 0 0 0 1px rgba(20,30,40,.35);
  display: flex; flex-direction: column;
}
.dtitle {
  height: 18px; flex: none; display: flex; align-items: center; justify-content: space-between;
  padding: 0 3px 1px 4px;
  background: linear-gradient(90deg, #c3d6e8, #a9c4dd 45%, #c9dcec);
  font-size: 10px; color: #2a2a2a;
}
.dx {
  width: 24px; height: 13px; border-radius: 2px;
  background: linear-gradient(#e08f80, #c4483a 55%, #b23e32);
  color: #fff; font-size: 12px; line-height: 12px; text-align: center; border: 1px solid #8a4a44;
}
.dbody { flex: 1; display: flex; padding: 14px 0 0 10px; }
.warn { width: 24px; height: 22px; margin-top: 11px; flex: none; }
.dmsg { margin: 0 0 0 7px; font-size: 8.300px; line-height: 10px; color: #262626; white-space: pre; }
.dbtns { height: 28px; flex: none; display: flex; gap: 6px; padding-left: 39px; }
.btn {
  width: 61px; height: 19px; padding: 0; font: 9px "Liberation Sans", sans-serif; color: #2a2a2a;
  background: #f0f0f0; border: 1px solid; border-color: #fafafa #8b8b8b #8b8b8b #fafafa;
}
.btn-def { border-color: #555 #444 #444 #555; }
.btn-off { color: #b0b0b0; margin-left: 2px; }
.glyph { font: 700 12px "Liberation Sans", sans-serif; fill: #333; stroke: none; }
.glyph.big { font-size: 17px; }
.glyph.mid { font-size: 10px; font-weight: 400; }
.glyph.huge { font-size: 19px; fill: #222; }
.glyph.tiny { font-size: 5.500px; }
.cursor { position: absolute; left: 607px; top: 188px; width: 11px; height: 16px; fill: #fff; stroke: #333; stroke-width: .9; }
```
